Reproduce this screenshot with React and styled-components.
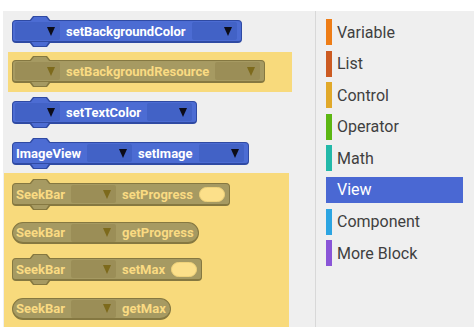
import React from "react";
import styled, { createGlobalStyle, css } from "styled-components";

const Global = createGlobalStyle`
  html, body { margin: 0; padding: 0; background: #ffffff; }
  body { width: 474px; height: 327px; overflow: hidden; font-family: Roboto, "Liberation Sans", sans-serif; }
  * { box-sizing: border-box; }
`;

const palettes = {
  blue: { fill: "#4c6cd3", field: "#4262c6", edge: "#2f4aa3", text: "#ffffff", tri: "#0c0c18" },
  dim: { fill: "#a69a62", field: "#9b8e57", edge: "#857841", text: "#fadb82", tri: "#7d6a1c" },
};

const Page = styled.div`
  display: flex;
  width: 474px;
  height: 327px;
  padding: 11px 0 0 3px;
  background: #ffffff;
`;

const Canvas = styled.div`
  flex: 0 0 313px;
  display: flex;
  flex-direction: column;
  align-items: flex-start;
  padding-top: 8px;
  background: #efefef;
  border-right: 1px solid #d8d8d8;
`;

const Highlight = styled.div`
  display: flex;
  flex-direction: column;
  align-items: flex-start;
  background: #f8da7c;
  margin-left: ${(p) => p.$ml}px;
  margin-top: ${(p) => p.$mt}px;
  width: ${(p) => p.$w}px;
  padding: ${(p) => p.$pad};
  ${(p) => p.$grow && css`flex: 1;`}
`;

const Block = styled.div`
  position: relative;
  display: flex;
  align-items: center;
  gap: 6px;
  height: ${(p) => (p.$reporter ? 22 : 23)}px;
  margin-left: ${(p) => p.$ml || 0}px;
  margin-top: ${(p) => p.$mt || 0}px;
  padding: 0 4px 0 ${(p) => (p.$reporter ? 3 : 2)}px;
  background: ${(p) => palettes[p.$tone].fill};
  border: 1px solid ${(p) => palettes[p.$tone].edge};
  border-bottom-width: 2px;
  border-radius: ${(p) => (p.$reporter ? "11px" : "4px")};
`;

const Notch = styled.span`
  position: absolute;
  left: 16px;
  width: 22px;
  height: 5px;
  background: ${(p) => palettes[p.$tone].edge};
  ${(p) =>
    p.$top
      ? css`
          top: -5px;
          clip-path: polygon(4px 0, calc(100% - 4px) 0, 100% 100%, 0 100%);
        `
      : css`
          bottom: -6px;
          clip-path: polygon(0 0, 100% 0, calc(100% - 4px) 100%, 4px 100%);
        `}
  &::after {
    content: "";
    position: absolute;
    left: 1px;
    right: 1px;
    background: ${(p) => palettes[p.$tone].fill};
    ${(p) =>
      p.$top
        ? css`
            top: 1px;
            bottom: -1px;
            clip-path: polygon(4px 0, calc(100% - 4px) 0, 100% 100%, 0 100%);
          `
        : css`
            top: -2px;
            bottom: 1px;
            clip-path: polygon(0 0, 100% 0, calc(100% - 4px) 100%, 4px 100%);
          `}
  }
`;

const Field = styled.span`
  display: flex;
  align-items: center;
  justify-content: flex-end;
  width: 45px;
  height: 18px;
  padding-right: 5px;
  background: ${(p) => palettes[p.$tone].field};
  border-radius: 2px;
`;

const Tri = styled.span`
  width: 0;
  height: 0;
  border-left: 4px solid transparent;
  border-right: 4px solid transparent;
  border-top: 9px solid ${(p) => palettes[p.$tone].tri};
`;

const Label = styled.span`
  font-family: Roboto, "Liberation Sans", sans-serif;
  font-weight: 700;
  font-size: 13px;
  line-height: 1;
  color: ${(p) => palettes[p.$tone].text};
  white-space: nowrap;
`;

const Oval = styled.span`
  width: 26px;
  height: 15px;
  border-radius: 8px;
  background: #fce08a;
  border: 1px solid #efd27a;
`;

const Panel = styled.div`
  flex: 1;
  display: flex;
  flex-direction: column;
  gap: 5.6px;
  padding: 8px 11px 0 10px;
  background: #efefef;
`;

const Category = styled.div`
  display: flex;
  align-items: center;
  height: 26px;
  background: ${(p) => (p.$active ? "#4a68d3" : "transparent")};
  font-family: Roboto, "Liberation Sans", sans-serif;
  font-size: 16px;
  color: ${(p) => (p.$active ? "#ffffff" : "#3f3f3f")};
  &::before {
    content: "";
    align-self: stretch;
    width: 6px;
    margin-right: 5px;
    background: ${(p) => p.$color};
  }
`;

function Drop({ tone }) {
  return (
    <Field $tone={tone}>
      <Tri $tone={tone} />
    </Field>
  );
}

function StackBlock({ tone, ml, mt, children }) {
  return (
    <Block $tone={tone} $ml={ml} $mt={mt}>
      <Notch $tone={tone} $top />
      <Notch $tone={tone} />
      {children}
    </Block>
  );
}

const categories = [
  { name: "Variable", color: "#ee7d16" },
  { name: "List", color: "#cc5b22" },
  { name: "Control", color: "#e1a92a" },
  { name: "Operator", color: "#5cb712" },
  { name: "Math", color: "#23b9a9" },
  { name: "View", color: "#4a68d3", active: true },
  { name: "Component", color: "#2ca5e2" },
  { name: "More Block", color: "#8a55d7" },
];

export default function App() {
  return (
    <>
      <Global />
      <Page>
        <Canvas>
          <StackBlock tone="blue" ml={9} mt={1}>
            <Drop tone="blue" />
            <Label $tone="blue">setBackgroundColor</Label>
            <Drop tone="blue" />
          </StackBlock>
          <Highlight $ml={5} $mt={9} $w={284} $pad="8px 0 9px 4px">
            <StackBlock tone="dim">
              <Drop tone="dim" />
              <Label $tone="dim">setBackgroundResource</Label>
              <Drop tone="dim" />
            </StackBlock>
          </Highlight>
          <StackBlock tone="blue" ml={9} mt={9}>
            <Drop tone="blue" />
            <Label $tone="blue">setTextColor</Label>
            <Drop tone="blue" />
          </StackBlock>
          <StackBlock tone="blue" ml={9} mt={18}>
            <Label $tone="blue" style={{ marginLeft: 1 }}>ImageView</Label>
            <Drop tone="blue" />
            <Label $tone="blue">setImage</Label>
            <Drop tone="blue" />
          </StackBlock>
          <Highlight $ml={1} $mt={8} $w={285} $pad="10px 0 0 8px" $grow>
            <StackBlock tone="dim">
              <Label $tone="dim" style={{ marginLeft: 1 }}>SeekBar</Label>
              <Drop tone="dim" />
              <Label $tone="dim">setProgress</Label>
              <Oval />
            </StackBlock>
            <Block $tone="dim" $reporter $mt={16}>
              <Label $tone="dim">SeekBar</Label>
              <Drop tone="dim" />
              <Label $tone="dim">getProgress</Label>
            </Block>
            <StackBlock tone="dim" mt={14}>
              <Label $tone="dim" style={{ marginLeft: 1 }}>SeekBar</Label>
              <Drop tone="dim" />
              <Label $tone="dim">setMax</Label>
              <Oval />
            </StackBlock>
            <Block $tone="dim" $reporter $mt={17}>
              <Label $tone="dim">SeekBar</Label>
              <Drop tone="dim" />
              <Label $tone="dim">getMax</Label>
            </Block>
          </Highlight>
        </Canvas>
        <Panel>
          {categories.map((c) => (
            <Category key={c.name} $color={c.color} $active={c.active}>
              {c.name}
            </Category>
          ))}
        </Panel>
      </Page>
    </>
  );
}
